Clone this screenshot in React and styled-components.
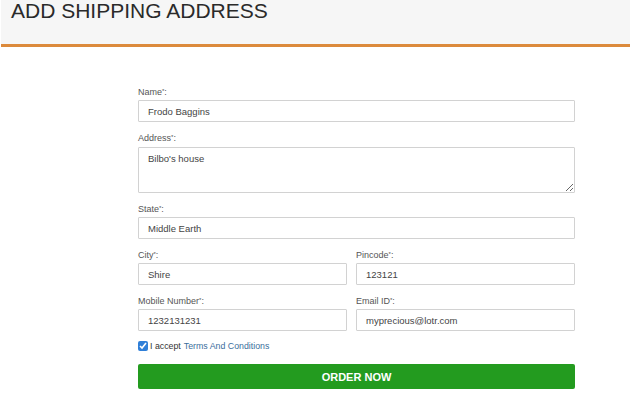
import React from "react";
import styled, { createGlobalStyle } from "styled-components";

const GlobalStyle = createGlobalStyle`
  html, body {
    margin: 0;
    padding: 0;
    background: #fff;
    font-family: "Liberation Sans", Arial, sans-serif;
  }
`;

const Header = styled.header`
  height: 44px;
  background: #f6f6f6;
  border-bottom: 3px solid #dc8a3c;
  margin-left: 1px;
`;

const Title = styled.h1`
  margin: 0;
  padding: 0 0 0 10px;
  font-size: 21px;
  line-height: 22px;
  font-weight: normal;
  color: #2a2a2a;
`;

const Form = styled.form`
  width: 437px;
  margin: 38px 0 0 138px;
  display: flex;
  flex-direction: column;
  gap: 9px;
`;

const Row = styled.div`
  display: grid;
  grid-template-columns: 209px 1fr;
  column-gap: 9px;
`;

const Field = styled.div`
  display: flex;
  flex-direction: column;
`;

const Label = styled.label`
  font-size: 9px;
  line-height: 12px;
  height: 12px;
  color: #555;
  margin-bottom: 3px;
`;

const Star = styled.sup`
  font-size: 6px;
  vertical-align: 2px;
`;

const Input = styled.input`
  box-sizing: border-box;
  height: 22px;
  width: 100%;
  border: 1px solid #d2d2d2;
  border-radius: 1px;
  padding: 0 9px;
  font-family: "Liberation Sans", Arial, sans-serif;
  font-size: 9.5px;
  color: #444;
  background: #fff;
  outline: none;
`;

const TextArea = styled.textarea`
  box-sizing: border-box;
  height: 46px;
  width: 100%;
  margin-top: 1px;
  border: 1px solid #d2d2d2;
  border-radius: 1px;
  padding: 5px 9px;
  font-family: "Liberation Sans", Arial, sans-serif;
  font-size: 9.5px;
  color: #444;
  resize: vertical;
  outline: none;
`;

const Accept = styled.div`
  display: flex;
  align-items: center;
  height: 12px;
  font-size: 8.8px;
  color: #333;
`;

const Check = styled.input`
  width: 10px;
  height: 10px;
  margin: 0 2px 0 0;
  accent-color: #2f7fd8;
`;

const Link = styled.a`
  color: #3b6e9c;
  text-decoration: none;
  margin-left: 3px;
`;

const Button = styled.button`
  height: 25px;
  margin-top: 3px;
  border: none;
  border-radius: 2px;
  background: #239b1f;
  color: #fff;
  font-family: "Liberation Sans", Arial, sans-serif;
  font-size: 11px;
  font-weight: bold;
  cursor: pointer;
`;

const FormField = ({ label, value, area }) => (
  <Field>
    <Label>
      {label}
      <Star>*</Star>:
    </Label>
    {area ? <TextArea defaultValue={value} /> : <Input defaultValue={value} />}
  </Field>
);

export default function App() {
  return (
    <>
      <GlobalStyle />
      <Header>
        <Title>ADD SHIPPING ADDRESS</Title>
      </Header>
      <Form onSubmit={(e) => e.preventDefault()}>
        <FormField label="Name" value="Frodo Baggins" />
        <FormField label="Address" value="Bilbo's house" area />
        <FormField label="State" value="Middle Earth" />
        <Row>
          <FormField label="City" value="Shire" />
          <FormField label="Pincode" value="123121" />
        </Row>
        <Row>
          <FormField label="Mobile Number" value="1232131231" />
          <FormField label="Email ID" value="myprecious@lotr.com" />
        </Row>
        <Accept>
          <Check type="checkbox" defaultChecked />
          I accept
          <Link href="#">Terms And Conditions</Link>
        </Accept>
        <Button type="submit">ORDER NOW</Button>
      </Form>
    </>
  );
}
